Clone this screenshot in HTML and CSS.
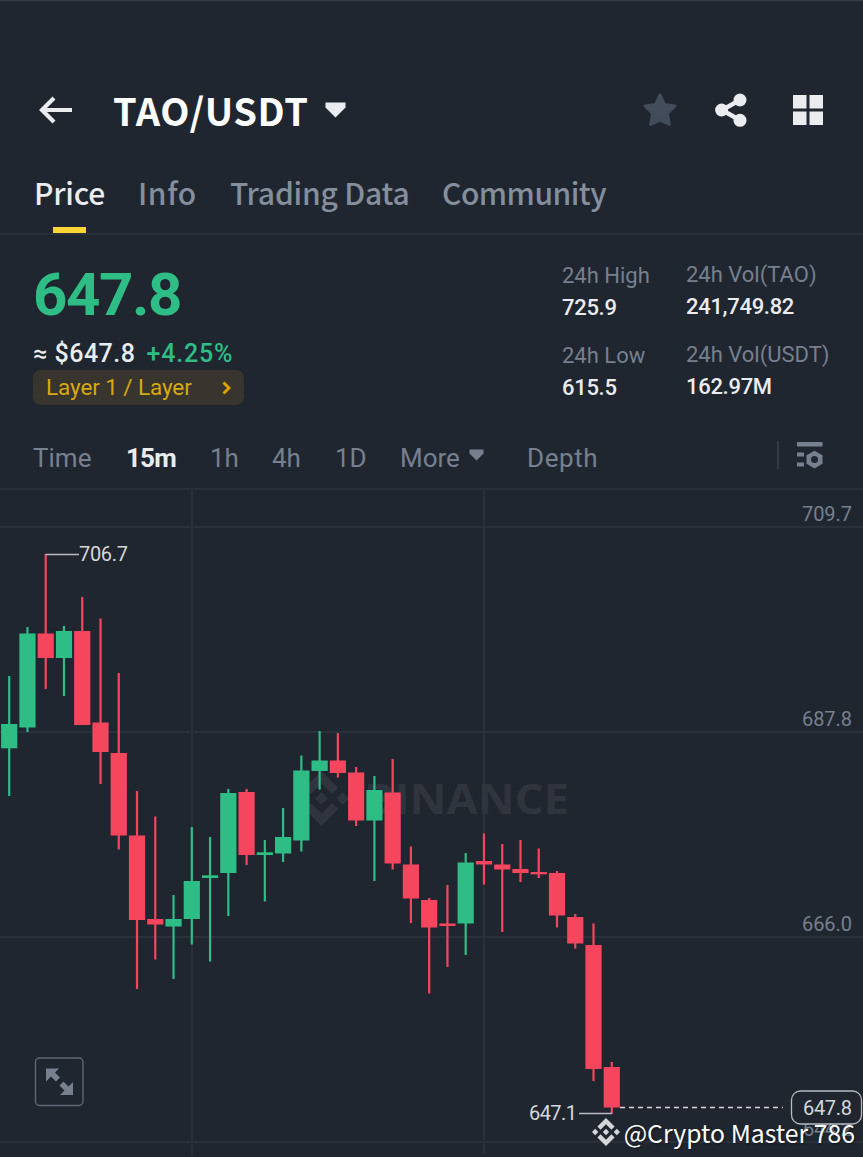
FILE: index.html
```html
<!DOCTYPE html>
<html lang="en">
<head>
    <meta charset="UTF-8">
    <meta name="viewport" content="width=device-width,initial-scale=1">
    <title>TAO/USDT</title>
    <link rel="stylesheet" href="styles.css">
</head>
<body>
    <div class="app">
        <header class="header">
            <svg class="back" width="34" height="28" viewBox="0 0 34 28"><path d="M33 14H3M15 2L3 14l12 12" fill="none" stroke="#eaecef" stroke-width="4.2"/></svg>
            <h1>TAO/USDT</h1>
            <svg class="caret" width="21" height="16" viewBox="0 0 21 16"><path d="M.5.5h20v5L10.500 15.500.5 5.500z" fill="#eaecef"/></svg>
            <div class="actions">
                <svg width="34" height="34" viewBox="0 0 34 34"><path d="M17 2l4.500 9.600 10.500 1.400-7.600 7.300 1.900 11.200L17 27.200 7.700 31.500l1.900-11.200L2 13l10.500-1.400z" fill="#434c5a" stroke="#434c5a" stroke-width="3" stroke-linejoin="round"/></svg>
                <svg width="32" height="34" viewBox="0 0 32 34"><path d="M25 7L7 17l18 10.300" fill="none" stroke="#eaecef" stroke-width="4.500"/><g fill="#eaecef"><circle cx="25" cy="7" r="6.500"/><circle cx="6.600" cy="17" r="6.500"/><circle cx="25" cy="27.300" r="6.500"/></g></svg>
                <svg width="30" height="30" viewBox="0 0 30 30"><path d="M0 0h13.500v13.500H0zM16.500 0H30v13.500H16.500zM0 16.500h13.500V30H0zM16.500 16.500H30V30H16.500z" fill="#eaecef"/></svg>
            </div>
        </header>

        <nav class="tabs">
            <span class="tab active">Price</span>
            <span class="tab info">Info</span>
            <span class="tab trading">Trading Data</span>
            <span class="tab community">Community</span>
        </nav>

        <section class="summary">
            <div class="quote">
                <div class="price">647.8</div>
                <div class="approx"><span>≈ $647.8</span><span class="up">+4.25%</span></div>
                <div class="tag">
                    <span>Layer 1 / Layer</span>
                    <svg width="9" height="14" viewBox="0 0 9 14"><path d="M1.500 1.500L7 7l-5.500 5.500" fill="none" stroke="#d9a108" stroke-width="3"/></svg>
                </div>
            </div>
            <dl class="stats">
                <div><dt>24h High</dt><dd>725.9</dd></div>
                <div><dt>24h Low</dt><dd>615.5</dd></div>
            </dl>
            <dl class="stats volume">
                <div><dt>24h Vol(TAO)</dt><dd>241,749.82</dd></div>
                <div><dt>24h Vol(USDT)</dt><dd>162.97M</dd></div>
            </dl>
        </section>

        <div class="intervals">
            <span class="interval time">Time</span>
            <span class="interval m15">15m</span>
            <span class="interval h1">1h</span>
            <span class="interval h4">4h</span>
            <span class="interval d1">1D</span>
            <span class="interval more">More <svg width="15" height="12" viewBox="0 0 15 12"><path d="M.5.5h14v4l-7 7-7-7z" fill="#76808f"/></svg></span>
            <span class="interval depth">Depth</span>
            <div class="settings">
                <svg width="26" height="28" viewBox="0 0 26 28"><path d="M0 1h25.500v4.500H0zM0 11.500h7v4H0zM0 21.500h7v4H0z" fill="#76808f"/><path d="M17.500 9.700l8 4.500v8.600l-8 4.700-8-4.700v-8.600zm0 5.400a3.500 3.500 0 1 0 0 7 3.500 3.500 0 0 0 0-7z" fill="#76808f" fill-rule="evenodd"/></svg>
            </div>
        </div>

        <div class="chart-wrap">
            <svg class="chart" width="863" height="667" viewBox="0 490 863 667">
                <defs>
                    <symbol id="logo" viewBox="0 0 24 24">
                        <path d="M16.624 13.920l2.718 2.716-7.353 7.353-7.353-7.353 2.717-2.716 4.636 4.660zM21.261 9.284L24 12l-2.715 2.716L18.568 12zM11.989 9.285L14.705 12l-2.716 2.693L9.272 12zM2.716 9.284L5.409 12l-2.692 2.692L0 12zM11.989.011l7.353 7.330-2.718 2.715-4.635-4.635-4.636 4.659-2.717-2.715z"/>
                    </symbol>
                </defs>
                <path class="grid" d="M0 527H863M0 732H863M0 937H863M0 1142H863M192 490V1154M484 490V1154"/>
                <g class="watermark">
                    <use href="#logo" x="294" y="771" width="55" height="55"/>
                    <text x="364" y="813.500" textLength="205" lengthAdjust="spacingAndGlyphs">BINANCE</text>
                </g>
                <g id="candles"></g>
                <path class="marker" d="M45.500 554.500H79M579 1113.500H612"/>
                <path class="last" d="M620 1107.500H783"/>
                <text class="extreme" x="79" y="560.500" textLength="49">706.7</text>
                <text class="extreme" x="529" y="1120" textLength="48">647.1</text>
                <g class="axis">
                    <text x="802" y="521" textLength="50">709.7</text>
                    <text x="802" y="726" textLength="50">687.8</text>
                    <text x="802" y="931" textLength="50">666.0</text>
                    <text x="803" y="1136" textLength="49">644.2</text>
                </g>
                <rect class="last-box" x="791.500" y="1091" width="70" height="33" rx="9"/>
                <text class="extreme" x="803" y="1115" textLength="49">647.8</text>
                <rect class="expand" x="35.500" y="1058" width="47.500" height="47.500" rx="4"/>
                <path d="M46 1068.500h13l-4 4 5 5-4 4-5-5-5 5zM73 1095H60l4.500-4.500-5-5 4-4 5 5 4.500-4.500z" fill="#76808f"/>
            </svg>
            <div class="credit">
                <svg width="28" height="28"><use href="#logo" width="28" height="28" fill="#d5d6d8"/></svg>
                <span>@Crypto Master 786</span>
            </div>
        </div>
    </div>

    <script src="chart.js"></script>
</body>
</html>
```

FILE: styles.css
```css
body {
    margin: 0;
    background: #202630;
    color: #eaecef;
    font-family: Roboto, sans-serif;
}
.app {
    width: 863px;
    height: 1157px;
    overflow: hidden;
    box-sizing: border-box;
    border-top: 1px solid #383e48;
}
svg {
    display: block;
    flex: none;
}
.header {
    display: flex;
    align-items: center;
    height: 62px;
    padding: 78px 40px 0 39px;
}
.header h1 {
    width: 195px;
    margin: 0 17px 0 40px;
    font: 700 38px/56px "Noto Sans CJK SC", sans-serif;
    letter-spacing: 0.6px;
    color: #fff;
    white-space: nowrap;
}
.actions {
    display: flex;
    align-items: center;
    margin-left: auto;
}
.actions svg + svg {
    margin-left: 38px;
}
.actions svg:last-child {
    margin-left: 46px;
}
.tabs {
    display: flex;
    height: 61px;
    padding: 31px 34px 0;
    border-bottom: 2px solid #29303b;
    font: 500 30px/40px "Noto Sans CJK SC", sans-serif;
    letter-spacing: -0.2px;
    color: #848e9c;
    white-space: nowrap;
}
.tab {
    width: 104px;
}
.tab.active {
    color: #eaecef;
    display: flex;
    flex-direction: column;
}
.tab.active::after {
    content: "";
    width: 33px;
    height: 7px;
    margin: 15px 0 0 19px;
    background: #fcd535;
}
.info {
    width: 92px;
    letter-spacing: 0.6px;
}
.trading {
    width: 212px;
}
.community {
    letter-spacing: -0.5px;
}
.summary {
    display: flex;
    height: 169px;
    padding-left: 33px;
}
.quote {
    width: 529px;
    padding-top: 28px;
}
.price {
    font-size: 60px;
    font-weight: 700;
    line-height: 64px;
    letter-spacing: -1.4px;
    color: #2ebd85;
}
.approx {
    display: flex;
    gap: 11px;
    margin-top: 10px;
    font-size: 25px;
    font-weight: 500;
    line-height: 33px;
    letter-spacing: 0.5px;
}
.up {
    color: #2ebd85;
    letter-spacing: 0.8px;
}
.tag {
    display: flex;
    align-items: center;
    justify-content: space-between;
    width: 185px;
    height: 35px;
    padding: 0 13px;
    border-radius: 8px;
    background: #37352d;
    color: #d9a810;
    font-size: 22.5px;
    line-height: 32px;
    letter-spacing: -0.1px;
}
.tag span {
    padding-bottom: 2px;
}
.stats {
    width: 124px;
    margin: 0;
    padding-top: 25px;
    font-size: 22px;
    line-height: 31px;
    white-space: nowrap;
}
.volume {
    padding-top: 24px;
}
.stats div {
    height: 80px;
}
.stats dt {
    color: #76808f;
}
.stats dd {
    margin: 0;
    font-weight: 500;
    line-height: 33px;
    letter-spacing: -0.3px;
}
.intervals {
    display: flex;
    height: 84px;
    padding-left: 33px;
    border-bottom: 2px solid #29303b;
    font-size: 26px;
    line-height: 108px;
    color: #76808f;
    white-space: nowrap;
}
.time {
    width: 93px;
}
.m15 {
    width: 84px;
    font-weight: 700;
    letter-spacing: -0.8px;
    color: #eaecef;
}
.h1 {
    width: 62px;
}
.h4 {
    width: 63px;
}
.d1 {
    width: 65px;
}
.more {
    display: flex;
    gap: 9px;
    width: 127px;
}
.more svg {
    margin-top: 45px;
}
.depth {
    letter-spacing: 0.6px;
}
.settings {
    height: 28px;
    margin: 37px 40px 0 auto;
    padding-left: 18px;
    border-left: 2px solid #333a46;
}
.chart-wrap {
    position: relative;
}
.grid {
    fill: none;
    stroke: #2b313c;
    stroke-width: 2;
}
.watermark {
    fill: #2f343e;
    font: 700 42px "Open Sans", sans-serif;
}
.rise {
    fill: #2ebd85;
}
.fall {
    fill: #f6465d;
}
.marker {
    fill: none;
    stroke: #b7bac0;
    stroke-width: 1.5;
}
.last {
    stroke: #d5d7da;
    stroke-width: 1.3;
    stroke-dasharray: 5 4;
}
.extreme {
    fill: #d5d7da;
    font-size: 20px;
}
.axis {
    fill: #76808f;
    font-size: 20px;
}
.last-box {
    fill: #202630;
    stroke: #b7bac0;
    stroke-width: 1.3;
}
.expand {
    fill: none;
    stroke: #5e6673;
    stroke-width: 1.4;
}
.credit {
    position: absolute;
    right: 8px;
    bottom: 7px;
    display: flex;
    align-items: center;
    gap: 4px;
    font: 24.8px/36px "Noto Sans CJK SC", sans-serif;
    color: #fff;
    white-space: nowrap;
    text-shadow: 1px 1px 2px rgba(0,0,0,0.5);
}
```

FILE: chart.js
```js
// high, body top, body bottom, low, rising (1) or falling (0)
const candles = [
    [676, 724, 748.3, 796, 1],
    [627, 633.5, 727.5, 732, 1],
    [554, 633.5, 658, 689, 0],
    [626, 631, 658, 696, 1],
    [597, 631, 725, 725, 0],
    [618.5, 722.5, 752, 784, 0],
    [673, 753, 835.5, 849.5, 0],
    [791, 835.5, 920, 989, 0],
    [816.5, 919, 924.5, 959.5, 0],
    [895, 919, 926.5, 979, 1],
    [827, 881, 919, 944.5, 1],
    [837, 875.3, 878, 961.5, 1],
    [789, 793, 873, 916, 1],
    [789, 792, 855, 865, 0],
    [840, 852.3, 855, 901.5, 1],
    [808, 837, 853.5, 862, 1],
    [755.5, 770.5, 840.5, 851.5, 1],
    [731, 760.5, 771, 789.5, 1],
    [733, 760.5, 773, 777.5, 0],
    [767, 772.5, 820.5, 826, 0],
    [776, 790, 820.5, 881, 1],
    [759, 792.5, 863.5, 869.5, 0],
    [846.5, 864.5, 898.5, 923, 0],
    [898, 900, 927.5, 993.5, 0],
    [885, 923.5, 926, 967, 0],
    [853, 862.5, 923.5, 955, 1],
    [833.5, 861, 864.5, 884.5, 0],
    [844, 864.5, 869.5, 932, 0],
    [840, 869, 873, 882, 0],
    [848.5, 872, 874.3, 878, 0],
    [871, 873, 915.5, 927.5, 0],
    [914, 917, 943.5, 948.5, 0],
    [923.5, 945, 1069, 1081, 0],
    [1062, 1067, 1107.5, 1114, 0]
];

document.getElementById('candles').innerHTML = candles.map(([high, top, bottom, low, up], i) => {
    const x = 9.2 + i * 18.26;
    return `<g class="${up ? 'rise' : 'fall'}">
        <rect x="${x - 1.1}" y="${high}" width="2.2" height="${low - high}"/>
        <rect x="${x - 8.1}" y="${top}" width="16.2" height="${bottom - top}"/>
    </g>`;
}).join('');
```
